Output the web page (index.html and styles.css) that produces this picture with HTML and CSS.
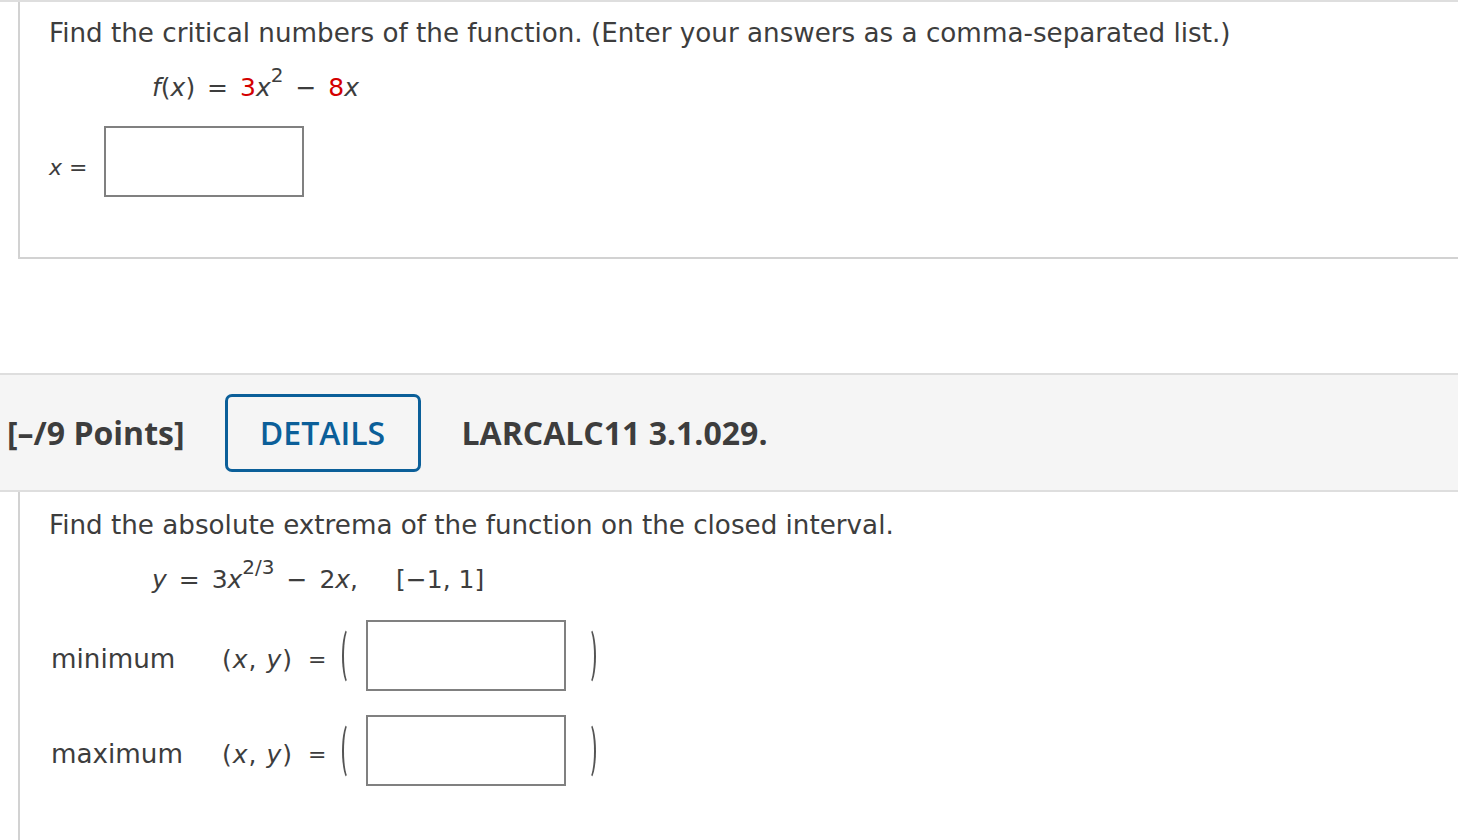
FILE: index.html
```html
<!DOCTYPE html>
<html lang="en">
<head>
    <meta charset="UTF-8">
    <title>Critical numbers</title>
    <link rel="stylesheet" href="styles.css">
</head>
<body>
    <div class="top-rule"></div>

    <div class="question first">
        <p class="prompt">Find the critical numbers of the function. (Enter your answers as a comma-separated list.)</p>
        <p class="formula"><i>f</i>(<i>x</i>) <span class="op">=</span> <span class="red">3</span><i>x</i><sup>2</sup> <span class="op">&minus;</span> <span class="red">8</span><i>x</i></p>
        <div class="answer-line">
            <span class="math"><i>x</i> =</span>
            <input type="text" class="answer">
        </div>
    </div>

    <div class="q-header">
        <span class="points">[&ndash;/9 Points]</span>
        <button class="details">DETAILS</button>
        <span class="q-title">LARCALC11 3.1.029.</span>
    </div>

    <div class="question second">
        <p class="prompt">Find the absolute extrema of the function on the closed interval.</p>
        <p class="formula"><i>y</i> <span class="op">=</span> 3<i>x</i><sup>2/3</sup> <span class="op">&minus;</span> 2<i>x</i>,<span class="interval">[&minus;1, 1]</span></p>

        <div class="extrema">
            <span class="label">minimum</span>
            <span class="math">(<i>x</i>, <i>y</i>)</span>
            <span class="math eq">=</span>
            <span class="paren left"></span>
            <input type="text" class="answer">
            <span class="paren right"></span>

            <span class="label">maximum</span>
            <span class="math">(<i>x</i>, <i>y</i>)</span>
            <span class="math eq">=</span>
            <span class="paren left"></span>
            <input type="text" class="answer">
            <span class="paren right"></span>
        </div>
    </div>
</body>
</html>
```

FILE: styles.css
```css
body {
    margin: 0;
    background-color: #fff;
    color: #3d3d3d;
    font-family: "DejaVu Sans", Verdana, sans-serif;
    font-size: 26.2px;
}

p {
    margin: 0;
}

.top-rule {
    border-top: 2px solid #dedede;
}

.question {
    margin-left: 18px;
    border-left: 2px solid #d2d2d2;
    padding-left: 29px;
}

.question.first {
    height: 257px;
    border-bottom: 2px solid #d2d2d2;
    box-sizing: border-box;
    padding-top: 14px;
}

.question.second {
    padding-top: 16px;
    height: 348px;
    box-sizing: border-box;
}

.prompt {
    line-height: 34px;
}

.formula {
    margin-top: 21px;
    margin-left: 103px;
    font-size: 25px;
    line-height: 34px;
}

.formula .op {
    margin: 0 4px;
}

.formula sup {
    font-size: 20px;
    line-height: 0;
    vertical-align: 14px;
}

.red {
    color: #d40000;
}

.interval {
    margin-left: 38px;
}

.answer-line {
    display: flex;
    align-items: center;
    margin-top: 21px;
}

.answer-line .math {
    width: 55px;
    padding-top: 12px;
    font-size: 22px;
}

input.answer {
    width: 200px;
    height: 71px;
    box-sizing: border-box;
    border: 2px solid #808080;
    border-radius: 0;
    margin: 0;
    padding: 0 8px;
    font-size: 22px;
    outline: none;
}

.q-header {
    margin-top: 114px;
    height: 119px;
    box-sizing: border-box;
    border-top: 2px solid #dedede;
    border-bottom: 2px solid #dedede;
    background-color: #f5f5f5;
    display: flex;
    align-items: center;
    padding-left: 7px;
    font-family: "Open Sans", sans-serif;
    font-weight: 700;
    font-size: 32px;
    color: #3d3d3d;
}

.details {
    margin-left: 40px;
    width: 196px;
    height: 78px;
    background: transparent;
    border: 3px solid #0b5f99;
    border-radius: 7px;
    color: #0b5f99;
    font-family: "Open Sans", sans-serif;
    font-weight: 600;
    font-size: 32px;
    padding: 0;
    cursor: pointer;
}

.q-title {
    margin-left: 41px;
}

.extrema {
    display: grid;
    grid-template-columns: 171px 86px 34px 24px 200px 30px;
    row-gap: 24px;
    align-items: center;
    margin-top: 23px;
    margin-left: 2px;
}

.extrema .label,
.extrema .math {
    padding-top: 7px;
}

.extrema .math {
    font-size: 25px;
    letter-spacing: 1px;
}

.extrema .eq {
    font-size: 22px;
}

.paren {
    width: 14px;
    height: 58px;
    box-sizing: border-box;
    border: 2px solid transparent;
    border-radius: 50%;
}

.paren.left {
    border-left-color: #555;
    justify-self: start;
}

.paren.right {
    border-right-color: #555;
    justify-self: end;
}
```
